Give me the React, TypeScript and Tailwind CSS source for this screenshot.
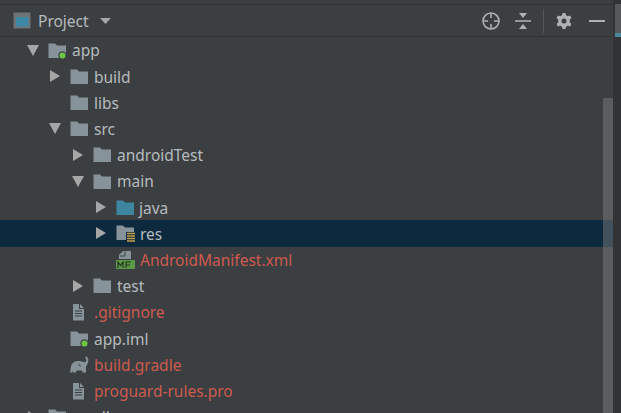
const folder = "M0.5 1.5 H7 L9 3.5 H18 V16 H0.5 Z";

function Folder({ color = "#87939a" }: { color?: string }) {
  return (
    <svg width="18" height="17" viewBox="0 0 18 17" className="shrink-0">
      <path d={folder} fill={color} />
    </svg>
  );
}

function Dot() {
  return (
    <svg width="18" height="17" viewBox="0 0 18 17" className="shrink-0 overflow-visible">
      <path d={folder} fill="#87939a" />
      <circle cx="14.5" cy="13.5" r="4.2" fill="#3c3f41" />
      <circle cx="14.5" cy="13.5" r="3" fill="#6cc644" />
    </svg>
  );
}

function ResFolder() {
  return (
    <svg width="19" height="19" viewBox="0 0 19 19" className="shrink-0 overflow-visible">
      <path d={folder} fill="#87939a" />
      <rect x="10" y="8" width="9" height="10" fill="#0b2a41" />
      <path d="M11 9.5 H19 M11 12 H19 M11 14.5 H19 M11 17 H19" stroke="#c9a04c" strokeWidth="1.3" />
    </svg>
  );
}

function TextFile() {
  return (
    <svg width="18" height="18" viewBox="0 0 18 18" className="shrink-0">
      <path d="M3 1 H9 V6 H14 V17.5 H3 Z M10 1 L14 5 H10 Z" fill="#87939a" />
      <path d="M5 8 H12 M5 10.5 H12 M5 13 H12" stroke="#3c3f41" strokeWidth="1.1" />
    </svg>
  );
}

function Manifest() {
  return (
    <svg width="19" height="19" viewBox="0 0 19 19" className="shrink-0">
      <path d="M3 9 V5 L7 1 H15 V9 Z" fill="#87939a" />
      <path d="M9 1.5 V6 H4" fill="none" stroke="#3c3f41" strokeWidth="1" />
      <rect x="0" y="10" width="19" height="9" fill="#5a9a46" />
      <path d="M2 18 V12 L4.5 15.5 L7 12 V18 M10 18 V12 H15 M10 15 H14" fill="none" stroke="#20301c" strokeWidth="1.1" />
    </svg>
  );
}

function Gradle() {
  return (
    <svg width="19" height="17" viewBox="0 0 19 17" className="shrink-0">
      <path
        d="M0 16.5 L1 10.5 C2 6.5 5 5 8 5 C10 5 11 5.5 12 5.5 C14 6.5 15.8 6.5 16.2 5 C16.5 3.5 15.8 2.5 15 1.5 L16.8 0.5 C18.4 2 18.9 5 17.6 7.5 C17 9 16.4 10 16 10.5 V16.5 H12.5 L12 14.5 H6.5 L6 16.5 H3 L2.8 14.5 L2.2 16.5 Z"
        fill="#87939a"
      />
      <path d="M9 7.5 C8.5 9 9 10 11 10" fill="none" stroke="#3c3f41" strokeWidth="0.9" />
    </svg>
  );
}

const rows = [
  { name: "app", pl: "pl-[27px]", arrow: "down", icon: <Dot />, tone: "text-[#b5bbbf]", gap: "ml-[5px]" },
  { name: "build", pl: "pl-[49px]", arrow: "right", icon: <Folder />, tone: "text-[#b5bbbf]", gap: "ml-[5px]" },
  { name: "libs", pl: "pl-[49px]", arrow: "", icon: <Folder />, tone: "text-[#b5bbbf]", gap: "ml-[5px]" },
  { name: "src", pl: "pl-[49px]", arrow: "down", icon: <Folder />, tone: "text-[#b5bbbf]", gap: "ml-[5px]" },
  { name: "androidTest", pl: "pl-[72px]", arrow: "right", icon: <Folder />, tone: "text-[#b5bbbf]", gap: "ml-[5px]" },
  { name: "main", pl: "pl-[72px]", arrow: "down", icon: <Folder />, tone: "text-[#b5bbbf]", gap: "ml-[5px]" },
  { name: "java", pl: "pl-[95px]", arrow: "right", icon: <Folder color="#3e86a0" />, tone: "text-[#b5bbbf]", gap: "ml-[4px]" },
  { name: "res", pl: "pl-[95px]", arrow: "right", icon: <ResFolder />, tone: "text-[#b5bbbf]", gap: "ml-[5px]", selected: true },
  { name: "AndroidManifest.xml", pl: "pl-[95px]", arrow: "", icon: <Manifest />, tone: "text-[#cc5a4f]", gap: "ml-[5px]" },
  { name: "test", pl: "pl-[72px]", arrow: "right", icon: <Folder />, tone: "text-[#b5bbbf]", gap: "ml-[5px]" },
  { name: ".gitignore", pl: "pl-[49px]", arrow: "", icon: <TextFile />, tone: "text-[#cc5a4f]", gap: "ml-[5px]" },
  { name: "app.iml", pl: "pl-[49px]", arrow: "", icon: <Dot />, tone: "text-[#b5bbbf]", gap: "ml-[5px]" },
  { name: "build.gradle", pl: "pl-[49px]", arrow: "", icon: <Gradle />, tone: "text-[#cc5a4f]", gap: "ml-[5px]" },
  { name: "proguard-rules.pro", pl: "pl-[49px]", arrow: "", icon: <TextFile />, tone: "text-[#cc5a4f]", gap: "ml-[5px]" },
  { name: "gradle", pl: "pl-[27px]", arrow: "right", icon: <Folder />, tone: "text-[#b5bbbf]", gap: "ml-[5px]" },
];

function Arrow({ dir }: { dir: string }) {
  if (dir === "down") {
    return (
      <svg width="12" height="11" viewBox="0 0 12 11" className="shrink-0">
        <path d="M0 0 H12 L6 11 Z" fill="#a6a6a6" />
      </svg>
    );
  }
  if (dir === "right") {
    return (
      <svg width="12" height="12" viewBox="0 0 12 12" className="shrink-0">
        <path d="M1 0 L11 6 L1 12 Z" fill="#a6a6a6" />
      </svg>
    );
  }
  return null;
}

export default function App() {
  return (
    <div className="flex h-[413px] w-[621px] overflow-hidden bg-[#3c3f41] font-['Noto_Sans',sans-serif] text-[15.5px]">
      <div className="flex min-w-0 flex-1 flex-col">
        {/* Tool window header */}
        <div className="h-[5px] shrink-0 border-b border-[#323232] bg-[#3c3f41]" />
        <div className="flex h-[32px] shrink-0 items-center border-b border-[#323232] pl-[13px] pr-[8px]">
          <svg width="18" height="17" viewBox="0 0 18 17" className="shrink-0">
            <rect x="0.5" y="0.5" width="17" height="16" fill="#6e7376" />
            <rect x="3" y="5" width="12.5" height="9.5" fill="#3d88a6" />
          </svg>
          <span className="ml-[7px] pt-[2px] text-[#b5bbbf]">Project</span>
          <svg width="11" height="6" viewBox="0 0 11 6" className="ml-[11px] mt-[1px]">
            <path d="M0 0 H11 L5.5 6 Z" fill="#a6a6a6" />
          </svg>
          <div className="ml-auto flex items-center">
            <svg width="18" height="18" viewBox="0 0 18 18">
              <circle cx="9" cy="9" r="8" fill="none" stroke="#aeb0b1" strokeWidth="1.6" />
              <path d="M9 1 V6 M9 12 V17 M1 9 H6 M12 9 H17" stroke="#aeb0b1" strokeWidth="1.6" />
            </svg>
            <svg width="16" height="16" viewBox="0 0 16 16" className="ml-[15px]">
              <path d="M0 8 H16" stroke="#aeb0b1" strokeWidth="1.6" />
              <path d="M4 0 H12 L8 5 Z M4 16 H12 L8 11 Z" fill="#aeb0b1" />
            </svg>
            <div className="ml-[12px] h-[24px] w-px bg-[#535759]" />
            <svg width="16" height="16" viewBox="0 0 16 16" className="ml-[12px]">
              <path
                fillRule="evenodd"
                d="M6.5 0 H9.5 L10 2.3 L11.8 3.3 L14 2.5 L15.5 5 L13.8 6.6 V9.4 L15.5 11 L14 13.5 L11.8 12.7 L10 13.7 L9.5 16 H6.5 L6 13.7 L4.2 12.7 L2 13.5 L0.5 11 L2.2 9.4 V6.6 L0.5 5 L2 2.5 L4.2 3.3 L6 2.3 Z M8 5.5 A2.5 2.5 0 1 0 8 10.5 A2.5 2.5 0 1 0 8 5.5 Z"
                fill="#aeb0b1"
              />
            </svg>
            <div className="ml-[17px] h-[2px] w-[16px] bg-[#aeb0b1]" />
          </div>
        </div>

        {/* Tree */}
        <div className="relative flex-1">
          {rows.map((row) => (
            <div
              key={row.name}
              className={`flex h-[26.2px] shrink-0 items-center ${row.pl} ${row.selected ? "bg-[#0d293e]" : ""}`}
            >
              <div className="flex w-[21px] shrink-0 items-center">
                <Arrow dir={row.arrow} />
              </div>
              <div className="flex w-[19px] shrink-0 items-center">{row.icon}</div>
              <span className={`${row.gap} whitespace-nowrap pt-[2px] ${row.tone}`}>{row.name}</span>
            </div>
          ))}
          {/* Scrollbar thumb */}
          <div className="absolute right-0 top-[61px] h-[400px] w-[10px] bg-[#7a7a7a]/50" />
        </div>
      </div>

      {/* Right edge strip */}
      <div className="flex w-[8px] shrink-0 flex-col bg-[#313335]">
        <div className="mt-[4px] ml-[2px] h-[29px] bg-[#55595b]" />
        <div className="ml-[2px] h-[4px] bg-[#4b8598]" />
      </div>
    </div>
  );
}
